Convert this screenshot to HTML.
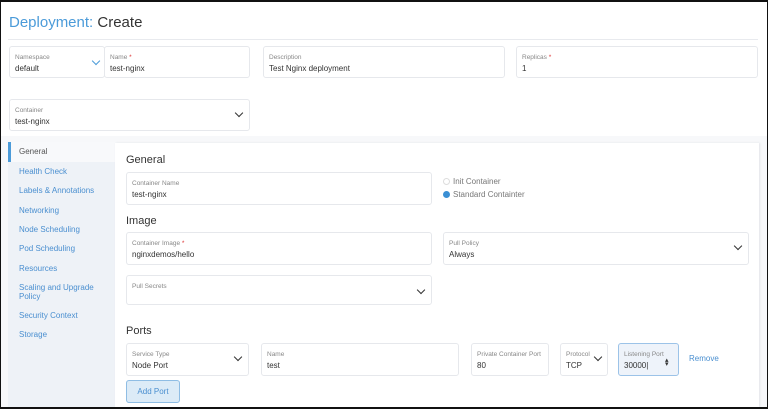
<!DOCTYPE html>
<html><head><style>
*{box-sizing:border-box;margin:0;padding:0}
body{width:768px;height:409px;overflow:hidden;background:#fff;font-family:"Liberation Sans",sans-serif;position:relative;color:#333}
.frame{position:absolute;inset:0;border:1px solid #111;border-top-width:2px;border-bottom-width:2px;pointer-events:none;z-index:9}
.a{position:absolute}
.box{position:absolute;border:1px solid #e6e8ec;border-radius:3px;background:#fff}
.lb{position:absolute;left:5px;top:7px;font-size:6.5px;color:#888}
.lb i{color:#d33;font-style:normal}
.v{position:absolute;left:5px;top:17px;font-size:8px;color:#333}
.chev{position:absolute;width:6px;height:6px;border-right:1.6px solid #333;border-bottom:1.6px solid #333;transform:rotate(45deg)}
.side{position:absolute;left:19px;font-size:8px;color:#4a8fd0}
h3{position:absolute;font-weight:normal;font-size:11px;color:#333}
</style></head><body>
<div class="frame"></div>
<div class="a" style="left:9px;top:14px;font-size:15px"><span style="color:#4b9bd9">Deployment:</span> <span style="color:#333">Create</span></div>
<div class="a" style="left:8px;top:39px;width:750px;height:1px;background:#e8eaee"></div>

<div class="box" style="left:9px;top:46px;width:96px;height:32px"><div class="lb">Namespace</div><div class="v">default</div><div class="chev" style="left:83px;top:11px;border-color:#4b9bd9"></div></div>
<div class="box" style="left:104px;top:46px;width:146px;height:32px"><div class="lb">Name <i>*</i></div><div class="v">test-nginx</div></div>
<div class="box" style="left:263px;top:46px;width:242px;height:32px"><div class="lb">Description</div><div class="v">Test Nginx deployment</div></div>
<div class="box" style="left:516px;top:46px;width:242px;height:32px"><div class="lb">Replicas <i>*</i></div><div class="v">1</div></div>

<div class="box" style="left:9px;top:99px;width:241px;height:32px"><div class="lb">Container</div><div class="v">test-nginx</div><div class="chev" style="left:226px;top:10px"></div></div>

<div class="a" style="left:1px;top:136px;width:766px;height:271px;background:#f7f8fa"></div>
<div class="a" style="left:8px;top:142px;width:107px;height:265px;background:#eef2f7"></div>
<div class="a" style="left:8px;top:142px;width:107px;height:20px;background:#f8f9fb"></div>
<div class="a" style="left:8px;top:142px;width:3px;height:20px;background:#4b9bd9"></div>
<div class="side" style="top:147px;color:#555">General</div>
<div class="side" style="top:167px">Health Check</div>
<div class="side" style="top:186px">Labels &amp; Annotations</div>
<div class="side" style="top:206px">Networking</div>
<div class="side" style="top:225px">Node Scheduling</div>
<div class="side" style="top:244px">Pod Scheduling</div>
<div class="side" style="top:264px">Resources</div>
<div class="side" style="top:283px;line-height:9px">Scaling and Upgrade<br>Policy</div>
<div class="side" style="top:311px">Security Context</div>
<div class="side" style="top:330px">Storage</div>

<div class="a" style="left:115px;top:143px;width:644px;height:264px;background:#fff;box-shadow:1px 0 2px #e2e4e8"></div>
<h3 style="left:126px;top:154px">General</h3>
<div class="box" style="left:126px;top:172px;width:306px;height:33px"><div class="lb">Container Name</div><div class="v">test-nginx</div></div>
<div class="a" style="left:443px;top:178px;width:7px;height:7px;border:1px solid #ddd;border-radius:50%"></div>
<div class="a" style="left:453px;top:177px;font-size:8px;color:#777">Init Container</div>
<div class="a" style="left:443px;top:191px;width:7px;height:7px;background:#3a8fd4;border-radius:50%"></div>
<div class="a" style="left:453px;top:190px;font-size:8px;color:#777">Standard Containter</div>

<h3 style="left:126px;top:215px">Image</h3>
<div class="box" style="left:126px;top:232px;width:306px;height:33px"><div class="lb">Container Image <i>*</i></div><div class="v">nginxdemos/hello</div></div>
<div class="box" style="left:443px;top:232px;width:306px;height:33px"><div class="lb">Pull Policy</div><div class="v">Always</div><div class="chev" style="left:291px;top:10px"></div></div>
<div class="box" style="left:126px;top:275px;width:306px;height:30px"><div class="lb">Pull Secrets</div><div class="chev" style="left:291px;top:11px"></div></div>

<h3 style="left:126px;top:325px">Ports</h3>
<div class="box" style="left:126px;top:343px;width:123px;height:33px"><div class="lb">Service Type</div><div class="v">Node Port</div><div class="chev" style="left:108px;top:10px"></div></div>
<div class="box" style="left:261px;top:343px;width:198px;height:33px"><div class="lb">Name</div><div class="v">test</div></div>
<div class="box" style="left:471px;top:343px;width:78px;height:33px"><div class="lb">Private Container Port</div><div class="v">80</div></div>
<div class="box" style="left:560px;top:343px;width:48px;height:33px"><div class="lb">Protocol</div><div class="v">TCP</div><div class="chev" style="left:34px;top:10px"></div></div>
<div class="box" style="left:618px;top:343px;width:61px;height:33px;background:#eef3fa;border-color:#9cc3e8"><div class="lb">Listening Port</div><div class="v">30000|</div><div class="a" style="left:46px;top:15px;font-size:7px;line-height:4px">▴<br>▾</div></div>
<div class="a" style="left:689px;top:354px;font-size:8px;color:#4a8fd0">Remove</div>

<div class="a" style="left:126px;top:380px;width:54px;height:23px;background:#dcebf7;border:1px solid #8fbde4;border-radius:3px;font-size:8px;color:#4a8fd0;text-align:center;line-height:21px">Add Port</div>
</body></html>
